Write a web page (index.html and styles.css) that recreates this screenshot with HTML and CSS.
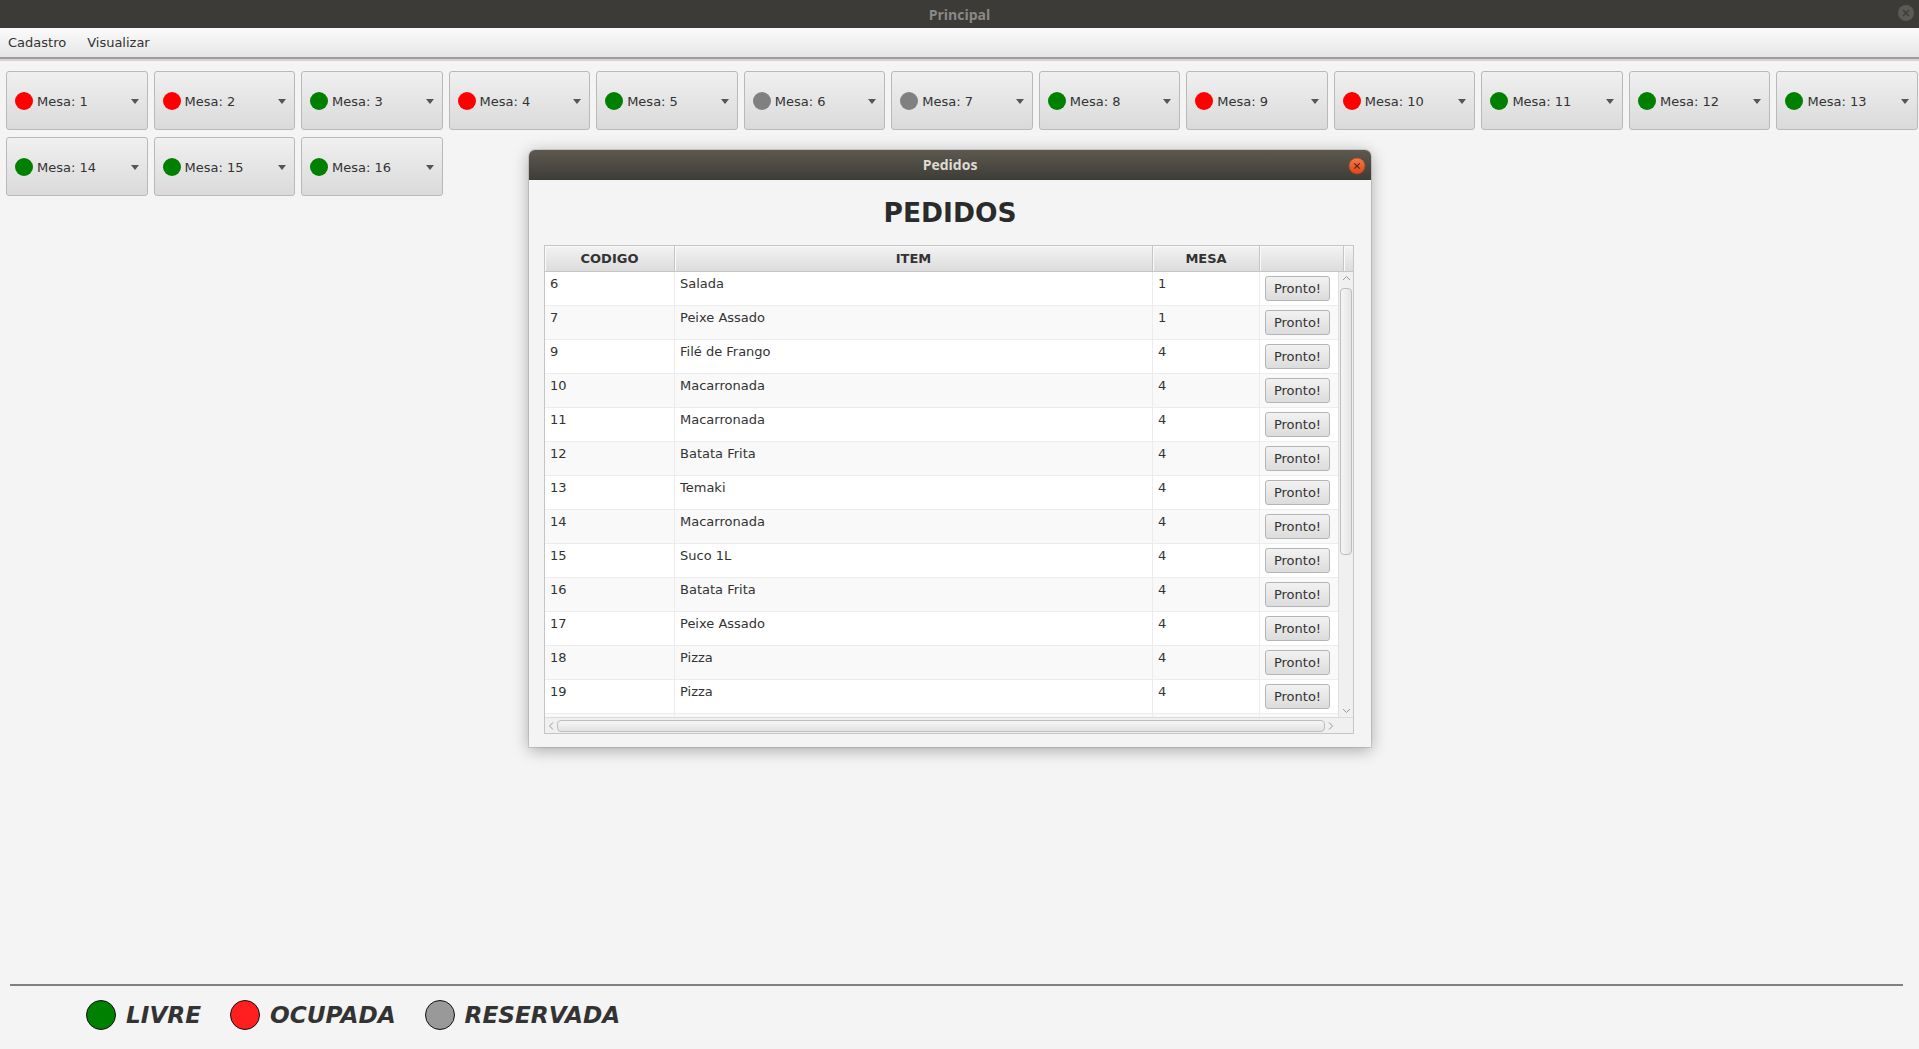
FILE: index.html
```html
<!DOCTYPE html>
<html lang="pt">
<head>
<meta charset="utf-8">
<title>Principal</title>
<link rel="stylesheet" href="styles.css">
</head>
<body>
<div class="app">
  <div class="titlebar">
    <span class="win-title">Principal</span>
    <span class="win-close"><svg width="18" height="18" viewBox="0 0 18 18"><circle cx="9" cy="9" r="8" fill="#5b5a55"/><path d="M6 6 L12 12 M12 6 L6 12" stroke="#3c3b37" stroke-width="1.4"/></svg></span>
  </div>
  <div class="menubar">
    <span class="menu-item">Cadastro</span>
    <span class="menu-item">Visualizar</span>
  </div>
  <div class="menusep"></div>
  <main class="content">
    <div class="mesas">
      <div class="mesa"><span class="dot red"></span><span class="mesa-label">Mesa: 1</span><span class="caret"></span></div>
      <div class="mesa"><span class="dot red"></span><span class="mesa-label">Mesa: 2</span><span class="caret"></span></div>
      <div class="mesa"><span class="dot green"></span><span class="mesa-label">Mesa: 3</span><span class="caret"></span></div>
      <div class="mesa"><span class="dot red"></span><span class="mesa-label">Mesa: 4</span><span class="caret"></span></div>
      <div class="mesa"><span class="dot green"></span><span class="mesa-label">Mesa: 5</span><span class="caret"></span></div>
      <div class="mesa"><span class="dot gray"></span><span class="mesa-label">Mesa: 6</span><span class="caret"></span></div>
      <div class="mesa"><span class="dot gray"></span><span class="mesa-label">Mesa: 7</span><span class="caret"></span></div>
      <div class="mesa"><span class="dot green"></span><span class="mesa-label">Mesa: 8</span><span class="caret"></span></div>
      <div class="mesa"><span class="dot red"></span><span class="mesa-label">Mesa: 9</span><span class="caret"></span></div>
      <div class="mesa"><span class="dot red"></span><span class="mesa-label">Mesa: 10</span><span class="caret"></span></div>
      <div class="mesa"><span class="dot green"></span><span class="mesa-label">Mesa: 11</span><span class="caret"></span></div>
      <div class="mesa"><span class="dot green"></span><span class="mesa-label">Mesa: 12</span><span class="caret"></span></div>
      <div class="mesa"><span class="dot green"></span><span class="mesa-label">Mesa: 13</span><span class="caret"></span></div>
      <div class="mesa"><span class="dot green"></span><span class="mesa-label">Mesa: 14</span><span class="caret"></span></div>
      <div class="mesa"><span class="dot green"></span><span class="mesa-label">Mesa: 15</span><span class="caret"></span></div>
      <div class="mesa"><span class="dot green"></span><span class="mesa-label">Mesa: 16</span><span class="caret"></span></div>
    </div>
    <footer class="footer">
      <div class="sep"></div>
      <div class="legend">
        <span class="legend-item"><span class="ldot lgreen"></span><span class="ltext">LIVRE</span></span>
        <span class="legend-item"><span class="ldot lred"></span><span class="ltext">OCUPADA</span></span>
        <span class="legend-item"><span class="ldot lgray"></span><span class="ltext">RESERVADA</span></span>
      </div>
    </footer>
  </main>

  <div class="dialog">
    <div class="dlg-titlebar">
      <span class="dlg-title">Pedidos</span>
      <span class="dlg-close"><svg width="18" height="18" viewBox="0 0 18 18"><defs><linearGradient id="cg" x1="0" y1="0" x2="0" y2="1"><stop offset="0" stop-color="#f27a4c"/><stop offset="1" stop-color="#dd4814"/></linearGradient></defs><circle cx="9" cy="9" r="8" fill="url(#cg)" stroke="#b83c10" stroke-width="0.6"/><path d="M6.3 6.3 L11.7 11.7 M11.7 6.3 L6.3 11.7" stroke="#5a2510" stroke-width="1.2"/></svg></span>
    </div>
    <div class="dlg-body">
      <h1 class="dlg-heading">PEDIDOS</h1>
      <div class="table">
        <div class="thead">
          <div class="th">CODIGO</div>
          <div class="th">ITEM</div>
          <div class="th">MESA</div>
          <div class="th"></div>
          <div class="th filler"></div>
        </div>
        <div class="tviewport">
          <div class="tbody">
            <div class="tr"><div class="td">6</div><div class="td">Salada</div><div class="td">1</div><div class="td btncell"><button class="pronto">Pronto!</button></div></div>
            <div class="tr"><div class="td">7</div><div class="td">Peixe Assado</div><div class="td">1</div><div class="td btncell"><button class="pronto">Pronto!</button></div></div>
            <div class="tr"><div class="td">9</div><div class="td">Filé de Frango</div><div class="td">4</div><div class="td btncell"><button class="pronto">Pronto!</button></div></div>
            <div class="tr"><div class="td">10</div><div class="td">Macarronada</div><div class="td">4</div><div class="td btncell"><button class="pronto">Pronto!</button></div></div>
            <div class="tr"><div class="td">11</div><div class="td">Macarronada</div><div class="td">4</div><div class="td btncell"><button class="pronto">Pronto!</button></div></div>
            <div class="tr"><div class="td">12</div><div class="td">Batata Frita</div><div class="td">4</div><div class="td btncell"><button class="pronto">Pronto!</button></div></div>
            <div class="tr"><div class="td">13</div><div class="td">Temaki</div><div class="td">4</div><div class="td btncell"><button class="pronto">Pronto!</button></div></div>
            <div class="tr"><div class="td">14</div><div class="td">Macarronada</div><div class="td">4</div><div class="td btncell"><button class="pronto">Pronto!</button></div></div>
            <div class="tr"><div class="td">15</div><div class="td">Suco 1L</div><div class="td">4</div><div class="td btncell"><button class="pronto">Pronto!</button></div></div>
            <div class="tr"><div class="td">16</div><div class="td">Batata Frita</div><div class="td">4</div><div class="td btncell"><button class="pronto">Pronto!</button></div></div>
            <div class="tr"><div class="td">17</div><div class="td">Peixe Assado</div><div class="td">4</div><div class="td btncell"><button class="pronto">Pronto!</button></div></div>
            <div class="tr"><div class="td">18</div><div class="td">Pizza</div><div class="td">4</div><div class="td btncell"><button class="pronto">Pronto!</button></div></div>
            <div class="tr"><div class="td">19</div><div class="td">Pizza</div><div class="td">4</div><div class="td btncell"><button class="pronto">Pronto!</button></div></div>
            <div class="tr"><div class="td"></div><div class="td"></div><div class="td"></div><div class="td btncell"></div></div>
          </div>
          <div class="vscroll">
            <svg class="chev" width="15" height="12" viewBox="0 0 15 12"><polyline points="4,8 7.5,4.5 11,8" fill="none" stroke="#9a9a9a" stroke-width="1"/></svg>
            <div class="vthumb"></div>
            <div class="vspace"></div>
            <svg class="chev" width="15" height="12" viewBox="0 0 15 12"><polyline points="4,4 7.5,7.5 11,4" fill="none" stroke="#9a9a9a" stroke-width="1"/></svg>
          </div>
        </div>
        <div class="hscroll">
          <svg class="hchev" width="12" height="16" viewBox="0 0 12 16"><polyline points="8,4.5 4.5,8 8,11.5" fill="none" stroke="#9a9a9a" stroke-width="1"/></svg>
          <div class="hthumb"></div>
          <svg class="hchev" width="12" height="16" viewBox="0 0 12 16"><polyline points="4,4.5 7.5,8 4,11.5" fill="none" stroke="#9a9a9a" stroke-width="1"/></svg>
          <div class="corner"></div>
        </div>
      </div>
    </div>
  </div>
</div>
</body>
</html>
```

FILE: styles.css
```css
* { box-sizing: border-box; }
html, body { margin: 0; padding: 0; }
body {
  background: #f4f4f4;
  font-family: "DejaVu Sans", "Liberation Sans", sans-serif;
  font-size: 13px;
  color: #333333;
}
.app {
  position: relative;
  width: 1919px;
  height: 1049px;
  display: flex;
  flex-direction: column;
  overflow: hidden;
}
/* window title bar */
.titlebar {
  height: 28px;
  background: #3c3b37;
  display: flex;
  align-items: center;
  justify-content: center;
  position: relative;
}
.win-title {
  font-family: "Open Sans", "DejaVu Sans", sans-serif;
  font-weight: 700;
  font-size: 14px;
  color: #8a8986;
}
.win-close {
  position: absolute;
  right: 4px;
  top: 4px;
  width: 18px;
  height: 18px;
}
/* menu bar */
.menubar {
  height: 29px;
  background: linear-gradient(#fbfbfb, #e6e6e6);
  display: flex;
  align-items: center;
  padding-left: 8px;
  gap: 21px;
}
.menu-item { color: #333; font-size: 13px; }
.menusep {
  height: 4px;
  background: linear-gradient(#a39b9b 0, #a39b9b 50%, #d8d4d4 50%, #d8d4d4 100%);
}
/* content */
.content {
  flex: 1;
  display: flex;
  flex-direction: column;
}
.mesas {
  display: grid;
  grid-template-columns: repeat(13, 1fr);
  column-gap: 6px;
  row-gap: 7px;
  padding: 10px 1px 0 6px;
}
.mesa {
  height: 59px;
  border: 1px solid #b9b9b9;
  border-radius: 3px;
  background: linear-gradient(#f0f0f0, #dadada);
  display: flex;
  align-items: center;
  padding-left: 8px;
  padding-top: 1px;
}
.dot {
  width: 18px;
  height: 18px;
  border-radius: 50%;
  flex: none;
}
.red { background: #ff0000; }
.green { background: #008000; }
.gray { background: #808080; }
.mesa-label {
  margin-left: 4px;
  color: #333;
  font-size: 13px;
}
.caret {
  margin-left: auto;
  margin-right: 8px;
  width: 0;
  height: 0;
  border-left: 4.5px solid transparent;
  border-right: 4.5px solid transparent;
  border-top: 5px solid #555555;
}
.footer {
  margin-top: auto;
}
.sep {
  height: 2px;
  background: #808080;
  margin: 0 16px 0 10px;
}
.legend {
  display: flex;
  align-items: center;
  height: 29px;
  margin: 14px 0 20px;
  padding-left: 86px;
  gap: 29px;
}
.legend-item {
  display: flex;
  align-items: center;
  gap: 10px;
}
.ldot {
  width: 30px;
  height: 30px;
  border-radius: 50%;
  border: 1px solid #111;
}
.lgreen { background: #008000; }
.lred { background: #ff1f1f; }
.lgray { background: #999999; }
.ltext {
  font-family: "DejaVu Sans", sans-serif;
  font-weight: 700;
  font-style: oblique;
  font-size: 23.2px;
  color: #333;
}
/* dialog window */
.dialog {
  position: absolute;
  left: 529px;
  top: 150px;
  width: 842px;
  height: 597px;
  background: #f4f4f4;
  border-radius: 6px 6px 0 0;
  box-shadow: 0 3px 16px rgba(0,0,0,0.32), 0 0 0 1px rgba(0,0,0,0.10);
  display: flex;
  flex-direction: column;
}
.dlg-titlebar {
  height: 30px;
  border-radius: 6px 6px 0 0;
  background: linear-gradient(#5d5950, #3d3c37);
  display: flex;
  align-items: center;
  justify-content: center;
  position: relative;
  padding-bottom: 2px;
}
.dlg-title {
  font-family: "Open Sans", "DejaVu Sans", sans-serif;
  font-weight: 700;
  font-size: 14px;
  color: #dfdbd2;
}
.dlg-close {
  position: absolute;
  right: 5px;
  top: 7px;
  width: 18px;
  height: 18px;
}
.dlg-body {
  padding: 0 17px 0 15px;
}
.dlg-heading {
  margin: 0;
  height: 65px;
  display: flex;
  align-items: center;
  justify-content: center;
  font-family: "DejaVu Sans", sans-serif;
  font-weight: 700;
  font-size: 26.5px;
  color: #2b2b2b;
  padding-left: 2px;
}
.table {
  border: 1px solid #c5c5c5;
  background: #ffffff;
}
.thead {
  display: grid;
  grid-template-columns: 130px 478px 107px 84px 9px;
  height: 26px;
  border-bottom: 1px solid #c5c5c5;
  background: linear-gradient(#f3f3f3, #dcdcdc);
}
.th {
  display: flex;
  align-items: center;
  justify-content: center;
  font-weight: 700;
  font-size: 13px;
  color: #333;
  border-right: 1px solid #c5c5c5;
  box-shadow: inset 1px 1px 0 #fafafa;
}
.th.filler { border-right: none; }
.tviewport {
  display: flex;
  height: 445px;
  overflow: hidden;
}
.tbody {
  width: 793px;
}
.tr {
  display: grid;
  grid-template-columns: 130px 478px 107px 78px;
  height: 34px;
  border-bottom: 1px solid #ececec;
  background: #ffffff;
}
.tr:nth-child(even) { background: #f9f9f9; }
.td {
  padding: 4px 5px 0 5px;
  border-right: 1px solid #ececec;
  color: #333;
  font-size: 13px;
  line-height: 15px;
}
.td.btncell {
  border-right: none;
  padding: 4px 0 0 5px;
}
.pronto {
  width: 65px;
  height: 25px;
  margin: 0;
  padding: 0;
  border: 1px solid #b5b5b5;
  border-radius: 3px;
  background: linear-gradient(#f2f2f2, #dcdcdc);
  font-family: "DejaVu Sans", sans-serif;
  font-size: 13px;
  color: #333;
}
.vscroll {
  width: 15px;
  background: #f0f0f0;
  border-left: 1px solid #e0e0e0;
  display: flex;
  flex-direction: column;
}
.chev { display: block; flex: none; }
.vthumb {
  margin: 4px 1px 0 1px;
  height: 267px;
  border: 1px solid #bdbdbd;
  border-radius: 4px;
  background: linear-gradient(90deg, #f6f6f6, #e4e4e4);
  flex: none;
}
.vspace { flex: 1; }
.hscroll {
  height: 16px;
  display: flex;
  align-items: center;
  background: #f0f0f0;
  border-top: 1px solid #dcdcdc;
}
.hchev { display: block; flex: none; }
.hthumb {
  flex: 1;
  height: 12px;
  border: 1px solid #bdbdbd;
  border-radius: 4px;
  background: linear-gradient(#f6f6f6, #e2e2e2);
}
.corner {
  width: 16px;
  height: 15px;
  background: #f0f0f0;
}
```
